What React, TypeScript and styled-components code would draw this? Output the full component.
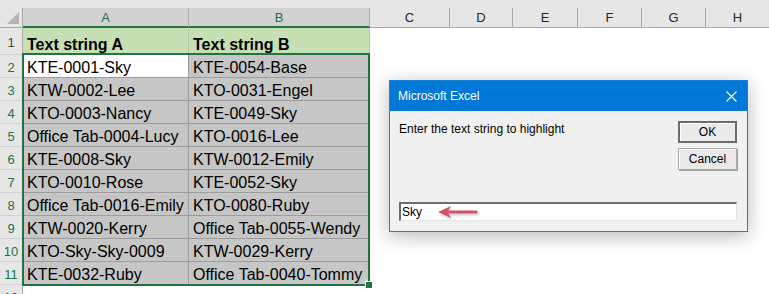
import React from 'react'
import styled, { createGlobalStyle } from 'styled-components'

const GlobalStyle = createGlobalStyle`
  html, body {
    margin: 0;
    padding: 0;
    background: #ffffff;
  }
  * {
    box-sizing: border-box;
  }
`

const COLUMNS = ['A', 'B', 'C', 'D', 'E', 'F', 'G', 'H']
const COL_WIDTHS = [23, 166, 181, 80, 63, 65, 64, 64, 64]

const DATA: [string, string][] = [
  ['KTE-0001-Sky', 'KTE-0054-Base'],
  ['KTW-0002-Lee', 'KTO-0031-Engel'],
  ['KTO-0003-Nancy', 'KTE-0049-Sky'],
  ['Office Tab-0004-Lucy', 'KTO-0016-Lee'],
  ['KTE-0008-Sky', 'KTW-0012-Emily'],
  ['KTO-0010-Rose', 'KTE-0052-Sky'],
  ['Office Tab-0016-Emily', 'KTO-0080-Ruby'],
  ['KTW-0020-Kerry', 'Office Tab-0055-Wendy'],
  ['KTO-Sky-Sky-0009', 'KTW-0029-Kerry'],
  ['KTE-0032-Ruby', 'Office Tab-0040-Tommy']
]

type CellKind = 'title' | 'selected' | 'active' | 'blank'

const App: React.FC = () => {
  return (
    <Page>
      <GlobalStyle />
      <TopBand />
      <SheetGrid>
        <CornerCell />
        {COLUMNS.map((c, i) => (
          <ColHead key={c} $selected={i < 2}>
            {c}
          </ColHead>
        ))}

        <RowHead $selected={false}>1</RowHead>
        <Cell $kind="title">Text string A</Cell>
        <Cell $kind="title">Text string B</Cell>
        {COLUMNS.slice(2).map((c) => (
          <Cell key={'1' + c} $kind="blank" />
        ))}

        {DATA.map(([a, b], r) => (
          <React.Fragment key={r}>
            <RowHead $selected>{r + 2}</RowHead>
            <Cell $kind={r === 0 ? 'active' : 'selected'}>{a}</Cell>
            <Cell $kind="selected">{b}</Cell>
            {COLUMNS.slice(2).map((c) => (
              <Cell key={r + c} $kind="blank" />
            ))}
          </React.Fragment>
        ))}

        <RowHead $selected={false}>12</RowHead>
        {COLUMNS.map((c) => (
          <Cell key={'12' + c} $kind="blank" />
        ))}

        <SelectionFrame />
        <FillHandle />
      </SheetGrid>

      <Dialog>
        <TitleBar>
          <TitleText>Microsoft Excel</TitleText>
          <CloseIcon width="11" height="11" viewBox="0 0 11 11">
            <path d="M0.5 0.5 L10.5 10.5 M10.5 0.5 L0.5 10.5" stroke="#ffffff" strokeWidth="1.1" />
          </CloseIcon>
        </TitleBar>
        <DialogBody>
          <PromptRow>
            <Prompt>Enter the text string to highlight</Prompt>
            <ButtonCol>
              <DlgButton $isDefault>OK</DlgButton>
              <DlgButton $isDefault={false}>Cancel</DlgButton>
            </ButtonCol>
          </PromptRow>
          <InputWrap>
            <TextInput>Sky</TextInput>
            <Arrow width="44" height="16" viewBox="0 0 44 16">
              <defs>
                <filter id="arrowShadow" x="-20%" y="-40%" width="140%" height="180%">
                  <feDropShadow dx="1" dy="1.5" stdDeviation="0.8" floodColor="#000" floodOpacity="0.25" />
                </filter>
              </defs>
              <g filter="url(#arrowShadow)">
                <path d="M10 6.6 L40 6.6 Q41.5 8 40 9.4 L10 9.4 Z" fill="#cf5568" />
                <path d="M1 8 L14 2 L10.5 8 L14 14 Z" fill="#cf5568" />
              </g>
            </Arrow>
          </InputWrap>
        </DialogBody>
      </Dialog>
    </Page>
  )
}

const Page = styled.div`
  position: relative;
  width: 769px;
  height: 294px;
  overflow: hidden;
  background: #ffffff;
  font-family: 'Liberation Sans', Arial, sans-serif;
`
const TopBand = styled.div`
  height: 8px;
  background: #e6e6e6;
`
const SheetGrid = styled.div`
  position: relative;
  display: grid;
  grid-template-columns: ${COL_WIDTHS.map((w) => w + 'px').join(' ')};
  grid-template-rows: 20px 27px repeat(10, 23px) 23px;
`
const CornerCell = styled.div`
  position: relative;
  background: #e6e6e6;
  border-right: 1px solid #ababab;
  border-bottom: 1px solid #ababab;
  &::after {
    content: '';
    position: absolute;
    right: 3px;
    bottom: 3px;
    width: 0;
    height: 0;
    border-left: 12px solid transparent;
    border-bottom: 12px solid #b5b5b5;
  }
`
const ColHead = styled.div<{ $selected: boolean }>`
  display: flex;
  align-items: center;
  justify-content: center;
  font-size: 13px;
  color: ${({ $selected }) => ($selected ? '#217346' : '#262626')};
  background: ${({ $selected }) => ($selected ? '#d2d2d2' : '#e6e6e6')};
  border-right: 1px solid #ababab;
  border-bottom: ${({ $selected }) =>
    $selected ? '2px solid #217346' : '1px solid #ababab'};
`
const RowHead = styled.div<{ $selected: boolean }>`
  display: flex;
  align-items: center;
  justify-content: center;
  font-size: 13px;
  padding-top: 2px;
  color: ${({ $selected }) => ($selected ? '#217346' : '#444444')};
  background: #e6e6e6;
  border-right: 1px solid #ababab;
  border-bottom: 1px solid #d0d0d0;
`
const cellBg: Record<CellKind, string> = {
  title: '#c6e0b4',
  selected: '#c6c6c6',
  active: '#ffffff',
  blank: '#ffffff'
}
const Cell = styled.div<{ $kind: CellKind }>`
  display: flex;
  align-items: flex-end;
  padding-left: 4px;
  font-size: 16px;
  line-height: 18px;
  white-space: nowrap;
  overflow: hidden;
  color: #000000;
  font-weight: ${({ $kind }) => ($kind === 'title' ? 700 : 400)};
  background: ${({ $kind }) => cellBg[$kind]};
  border-right: 1px solid
    ${({ $kind }) =>
      $kind === 'blank' ? 'transparent' : $kind === 'title' ? '#b4c9a6' : '#9c9c9c'};
  border-bottom: 1px solid
    ${({ $kind }) => ($kind === 'blank' || $kind === 'title' ? 'transparent' : '#9c9c9c')};
`
const SelectionFrame = styled.div`
  position: absolute;
  left: 22px;
  top: 45px;
  width: 348px;
  height: 233px;
  border: 2px solid #217346;
  pointer-events: none;
`
const FillHandle = styled.div`
  position: absolute;
  left: 365px;
  top: 273px;
  width: 8px;
  height: 8px;
  background: #217346;
  border: 1px solid #ffffff;
`
const Dialog = styled.div`
  position: absolute;
  left: 389px;
  top: 80px;
  width: 359px;
  height: 152px;
  display: flex;
  flex-direction: column;
  border: 1px solid #1a7fd6;
  background: #f0f0f0;
  box-shadow: 0 4px 18px rgba(0, 0, 0, 0.28);
  font-family: 'Liberation Sans', Arial, sans-serif;
  font-size: 12px;
`
const TitleBar = styled.div`
  height: 30px;
  flex: none;
  display: flex;
  align-items: center;
  justify-content: space-between;
  padding: 0 10px 0 8px;
  background: #0078d7;
`
const TitleText = styled.span`
  color: #ffffff;
  font-size: 12px;
`
const CloseIcon = styled.svg`
  display: block;
`
const DialogBody = styled.div`
  flex: 1;
  display: flex;
  flex-direction: column;
  padding: 10px 10px 10px 9px;
`
const PromptRow = styled.div`
  display: flex;
  align-items: flex-start;
  justify-content: space-between;
`
const Prompt = styled.div`
  color: #000000;
  line-height: 16px;
`
const ButtonCol = styled.div`
  display: flex;
  flex-direction: column;
  gap: 5px;
`
const DlgButton = styled.div<{ $isDefault: boolean }>`
  width: 59px;
  height: 22px;
  display: flex;
  align-items: center;
  justify-content: center;
  color: #000000;
  font-size: 12px;
  background: #e9e9e9;
  border: ${({ $isDefault }) =>
    $isDefault ? '2px solid #6b6b6b' : '1px solid #adadad'};
  box-shadow: ${({ $isDefault }) =>
    $isDefault ? 'inset 1px 1px 0 #ffffff' : 'inset 1px 1px 0 #fafafa, 1px 1px 0 #a0a0a0'};
`
const InputWrap = styled.div`
  position: relative;
  margin-top: auto;
`
const TextInput = styled.div`
  height: 19px;
  display: flex;
  align-items: center;
  padding-left: 1px;
  color: #000000;
  font-size: 12px;
  background: #ffffff;
  border-top: 2px solid #6e6e6e;
  border-left: 2px solid #6e6e6e;
  border-right: 1px solid #e3e3e3;
  border-bottom: 1px solid #e3e3e3;
`
const Arrow = styled.svg`
  position: absolute;
  left: 38px;
  top: 2px;
`

export default App
